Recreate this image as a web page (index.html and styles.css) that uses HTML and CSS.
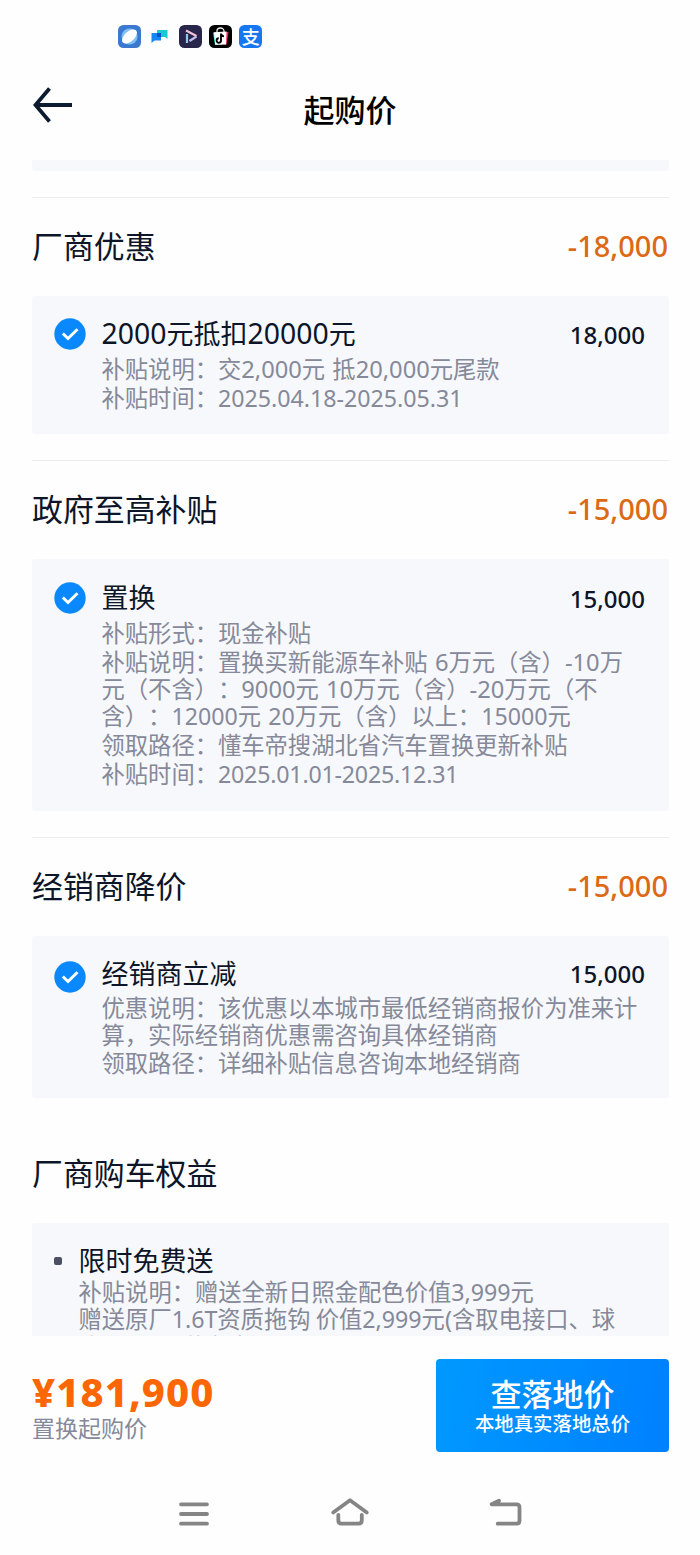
FILE: index.html
```
<!DOCTYPE html>
<html lang="zh-CN">
<head>
<meta charset="utf-8">
<title>起购价</title>
<link rel="stylesheet" href="styles.css">
</head>
<body>
<div class="screen">
  <div class="status">
    <svg width="23" height="23" viewBox="0 0 23 23"><rect width="23" height="23" rx="5.500" fill="#3b78cf"/><circle cx="11.500" cy="11.500" r="8" fill="#7cc0f5"/><ellipse cx="11.500" cy="11.500" rx="9" ry="5" transform="rotate(-42 11.500 11.500)" fill="#fff"/></svg>
    <svg width="23" height="23" viewBox="0 0 23 23"><path d="M9 5h10.500v9l-2.500-2H9z" fill="#19cbd0"/><path d="M3.500 8H13v7.500H6.500L3.500 18z" fill="#1587f5"/><path d="M9 8h4v4H9z" fill="#0753c8"/></svg>
    <svg width="23" height="23" viewBox="0 0 23 23"><rect width="23" height="23" rx="5.500" fill="#28264a"/><path d="M8 18V9" stroke="#8ec9e8" stroke-width="2.200" fill="none"/><path d="M7 5.500L17.500 11" stroke="#f3c1dd" stroke-width="2.200" fill="none"/><path d="M17.500 11.500L10.500 16" stroke="#c5bdf0" stroke-width="2.200" fill="none"/></svg>
    <svg width="23" height="23" viewBox="0 0 23 23"><rect width="23" height="23" rx="5.500" fill="#000"/><path d="M8 7.500V6a3.500 3 0 0 1 7 0v1.500" stroke="#eee" stroke-width="1.300" fill="none"/><path d="M4 7.500h11L13 20H6z" fill="#25e0dc"/><path d="M8 7h11.500L17.500 19.500H9z" fill="#f5295d"/><path d="M5 7.200l12.500-.7L17 19.500H6.200z" fill="#fff"/><path d="M12 8.500v7a2.200 2.200 0 1 1-2.200-2.200M12 8.800c.4 1.700 1.500 2.500 3 2.600" stroke="#000" stroke-width="1.900" fill="none"/></svg>
    <span class="pay">支</span>
  </div>
  <header class="bar">
    <svg class="back" width="40" height="38" viewBox="0 0 40 38"><path d="M17.500 2.500L3.500 19l14 16.500M3.500 19H40" fill="none" stroke="#0d1b30" stroke-width="3.800"/></svg>
    <h1>起购价</h1>
  </header>
  <main class="content">
    <div class="stub"></div>

    <section class="section">
      <div class="head"><h2>厂商优惠</h2><span class="off">-18,000</span></div>
      <div class="card c1">
        <svg class="check" viewBox="0 0 32 32"><circle cx="16" cy="16" r="15.700" fill="#0a89ff"/><path d="M8.800 15.500l5.200 5 9.500-9.300" fill="none" stroke="#fff" stroke-width="3"/></svg>
        <div class="text">
          <div class="row"><h3><b>2000</b>元抵扣<b>20000</b>元</h3><span class="sum">18,000</span></div>
          <div class="desc"><p>补贴说明：交<b>2,000</b>元 抵<b>20,000</b>元尾款</p><p>补贴时间：<b class="date">2025.04.18-2025.05.31</b></p></div>
        </div>
      </div>
    </section>

    <section class="section">
      <div class="head"><h2>政府至高补贴</h2><span class="off">-15,000</span></div>
      <div class="card c2">
        <svg class="check" viewBox="0 0 32 32"><circle cx="16" cy="16" r="15.700" fill="#0a89ff"/><path d="M8.800 15.500l5.200 5 9.500-9.300" fill="none" stroke="#fff" stroke-width="3"/></svg>
        <div class="text">
          <div class="row"><h3>置换</h3><span class="sum">15,000</span></div>
          <div class="desc"><p>补贴形式：现金补贴</p><p>补贴说明：置换买新能源车补贴 <b>6</b>万元（含）<b>-10</b>万<br>元（不含）：<b>9000</b>元 <b>10</b>万元（含）<b>-20</b>万元（不<br>含）：<b class="date">12000</b>元 <b class="date">20</b>万元（含）以上：<b class="date">15000</b>元</p><p>领取路径：懂车帝搜湖北省汽车置换更新补贴</p><p>补贴时间：<b class="date tight">2025.01.01-2025.12.31</b></p></div>
        </div>
      </div>
    </section>

    <section class="section">
      <div class="head"><h2>经销商降价</h2><span class="off">-15,000</span></div>
      <div class="card c3">
        <svg class="check" viewBox="0 0 32 32"><circle cx="16" cy="16" r="15.700" fill="#0a89ff"/><path d="M8.800 15.500l5.200 5 9.500-9.300" fill="none" stroke="#fff" stroke-width="3"/></svg>
        <div class="text">
          <div class="row"><h3>经销商立减</h3><span class="sum">15,000</span></div>
          <div class="desc"><p>优惠说明：该优惠以本城市最低经销商报价为准来计<br>算，实际经销商优惠需咨询具体经销商</p><p>领取路径：详细补贴信息咨询本地经销商</p></div>
        </div>
      </div>
    </section>

    <section class="section plain">
      <div class="head"><h2>厂商购车权益</h2></div>
      <div class="card c4">
        <i class="dot"></i>
        <div class="text">
          <div class="row"><h3>限时免费送</h3></div>
          <div class="desc"><p>补贴说明：赠送全新日照金配色价值<b class="date">3,999</b>元<br>赠送原厂<b class="date">1.6T</b>资质拖钩 价值<b class="date">2,999</b>元<b>(</b>含取电接口、球<br>头<b>)(</b>限四驱旗舰版<b>)</b></p></div>
        </div>
      </div>
    </section>
  </main>
  <footer class="foot">
    <div class="total"><strong>¥181,900</strong><span>置换起购价</span></div>
    <div class="cta"><span class="big">查落地价</span><span class="small">本地真实落地总价</span></div>
  </footer>
  <nav class="nav">
    <svg width="30" height="30" viewBox="0 0 30 30"><path d="M2 5.300h26M2 15h26M2 24.700h26"/></svg>
    <svg width="38" height="30" viewBox="0 0 38 30"><path d="M2.200 13.500L19 1.200l16.800 12.300M7.300 16v5.200q0 3.500 3.500 3.500h16.500q3.500 0 3.500-3.500V16"/></svg>
    <svg width="32" height="30" viewBox="0 0 32 30"><path d="M9 1.700L1.700 5.300h24.800q3 0 3 3v13.400q0 3-3 3H7.700"/></svg>
  </nav>
</div>
</body>
</html>
```
FILE: styles.css
```
* { box-sizing: border-box; }
body, h1, h2, h3, p { margin: 0; font-weight: 400; }
body { background: #fefefe; font-family: "Noto Sans CJK SC", sans-serif; color: #0d1528; text-spacing-trim: space-all; }
b { font-family: "Noto Sans", sans-serif; font-weight: 400; }
.screen { width: 700px; height: 1555px; overflow: hidden; display: flex; flex-direction: column; }

.status { height: 60px; flex: none; padding: 25px 0 0 118px; display: flex; gap: 7.300px; }
.pay { width: 23px; height: 23px; border-radius: 5.500px; background: #1677f0; color: #fff; font-size: 18px; font-weight: 500; line-height: 22px; text-align: center; }

.bar { height: 100px; flex: none; display: grid; grid-template-columns: 100px 1fr 100px; align-items: center; }
.back { margin: -10px 0 0 32px; }
.bar h1 { font-size: 31px; font-weight: 500; line-height: 40px; margin-top: -3px; text-align: center; color: #000; }

.content { height: 1176px; flex: none; padding: 0 31px 0 32px; overflow: hidden; }
.stub { height: 11px; background: #f7f8fb; border-radius: 0 0 3px 3px; }
.section { margin-top: 26px; border-top: 1px solid #ededf0; }
.section.plain { border-top-color: transparent; }
.head { height: 98px; padding-bottom: 4px; display: flex; align-items: center; justify-content: space-between; }
.head h2 { font-size: 30.900px; line-height: 40px; white-space: nowrap; }
.off { font-family: "Noto Sans", sans-serif; font-size: 29px; line-height: 40px; margin: 2px 1px 0 0; font-weight: 500; color: #dc6914; }

.card { background: #f7f8fb; border-radius: 3px; display: flex; padding: 18px 24px 0 22px; }
.c1 { height: 138px; }
.c2 { height: 252px; padding-top: 19px; }
.c3 { height: 162px; }
.c4 { height: 200px; }
.check { width: 32px; height: 32px; flex: none; margin: 4px 15.500px 0 0; }
.c3 .check { margin-top: 7px; }
.dot { width: 8px; height: 8px; flex: none; margin: 16px 16.500px 0 0; background: #4c5065; border-radius: 2px; }
.text { flex: 1; min-width: 0; }
.row { height: 38px; display: flex; align-items: center; justify-content: space-between; }
.row h3 { font-size: 27px; line-height: 38px; white-space: nowrap; }
.row h3 b { font-size: 28.400px; line-height: 30px; }
.sum { font-family: "Noto Sans", sans-serif; font-size: 24px; line-height: 34px; font-weight: 500; margin-top: 4px; }
.c3 .sum { margin-top: 2px; }
.desc { font-size: 23.300px; line-height: 27.300px; color: #858999; white-space: nowrap; word-spacing: 2px; display: flex; flex-direction: column; gap: 1.500px; }
.desc b { font-size: 23.700px; line-height: 20px; }
.desc .date { font-size: 23.200px; }
.desc .tight { letter-spacing: -.2px; }
.c1 .desc, .c2 .desc { padding-top: 3px; }
.c3 .desc { padding-top: 2px; gap: 0; }
.c4 .desc { margin-top: -1px; word-spacing: 0; }

.foot { height: 136px; flex: none; padding: 23px 31px 0 32px; display: flex; justify-content: space-between; }
.total { display: flex; flex-direction: column; }
.total strong { font-family: "Noto Sans", sans-serif; font-weight: 800; font-size: 40px; line-height: 44px; margin-top: 11px; letter-spacing: 1.100px; color: #fc6703; }
.total span { font-size: 23px; line-height: 28px; margin-top: -1px; color: #858999; }
.cta { width: 233px; height: 93px; border-radius: 4px; background: linear-gradient(100deg, #0099ff, #0080ff); color: #fff; display: flex; flex-direction: column; align-items: center; padding-top: 14px; }
.big { font-size: 31px; line-height: 39px; font-weight: 500; }
.small { font-size: 19.400px; line-height: 22px; font-weight: 500; }

.nav { flex: 1; display: flex; justify-content: space-between; padding: 27px 178px 0 179px; }
.nav svg { overflow: visible; fill: none; stroke: #858585; stroke-width: 3.800; stroke-linecap: round; stroke-linejoin: round; }
```
